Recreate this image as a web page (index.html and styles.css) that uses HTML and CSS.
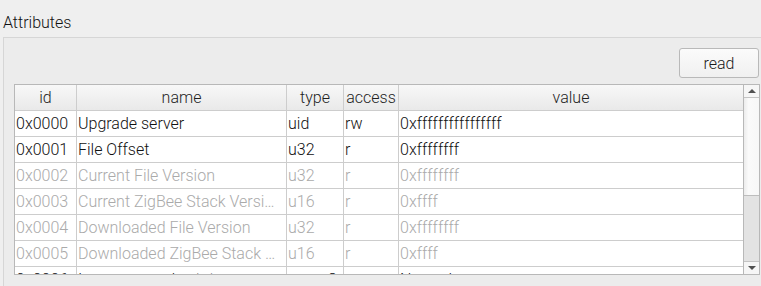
FILE: index.html
```html
<!DOCTYPE html>
<html>
<head>
<meta charset="utf-8">
<link rel="stylesheet" href="styles.css">
</head>
<body>
<div class="title">Attributes</div>
<div class="group">
  <div class="toolbar"><button class="btn">read</button></div>
  <div class="table">
    <div class="viewport">
      <div class="row head">
        <div class="c">id</div><div class="c">name</div><div class="c">type</div><div class="c">access</div><div class="c">value</div>
      </div>
      <div class="row">
        <div class="c">0x0000</div><div class="c">Upgrade server</div><div class="c">uid</div><div class="c">rw</div><div class="c">0xffffffffffffffff</div>
      </div>
      <div class="row">
        <div class="c">0x0001</div><div class="c">File Offset</div><div class="c">u32</div><div class="c">r</div><div class="c">0xffffffff</div>
      </div>
      <div class="row off">
        <div class="c">0x0002</div><div class="c">Current File Version</div><div class="c">u32</div><div class="c">r</div><div class="c">0xffffffff</div>
      </div>
      <div class="row off">
        <div class="c">0x0003</div><div class="c">Current ZigBee Stack Versi…</div><div class="c">u16</div><div class="c">r</div><div class="c">0xffff</div>
      </div>
      <div class="row off">
        <div class="c">0x0004</div><div class="c">Downloaded File Version</div><div class="c">u32</div><div class="c">r</div><div class="c">0xffffffff</div>
      </div>
      <div class="row off">
        <div class="c">0x0005</div><div class="c">Downloaded ZigBee Stack …</div><div class="c">u16</div><div class="c">r</div><div class="c">0xffff</div>
      </div>
      <div class="row">
        <div class="c">0x0006</div><div class="c">Image upgrade status</div><div class="c">enum8</div><div class="c">r</div><div class="c">Normal</div>
      </div>
    </div>
    <div class="scrollbar">
      <div class="sb-btn up"><span class="arrow-up"></span></div>
      <div class="sb-handle"></div>
      <div class="sb-track"></div>
      <div class="sb-btn down"><span class="arrow-down"></span></div>
    </div>
  </div>
</div>
</body>
</html>
```

FILE: styles.css
```css
html, body {
  margin: 0;
  padding: 0;
}
body {
  width: 761px;
  height: 286px;
  overflow: hidden;
  background: #efefef;
  font-family: Roboto, "Liberation Sans", sans-serif;
  font-size: 16px;
  font-weight: 300;
  color: #111;
}
.title {
  box-sizing: border-box;
  height: 37px;
  padding: 13px 0 0 3px;
  line-height: 19px;
  color: #111;
}
.group {
  margin-left: 3px;
  border-top: 1px solid #d6d6d6;
  border-left: 1px solid #d6d6d6;
  background: #ececec;
  padding: 10px 1px 20px 10px;
}
.toolbar {
  display: flex;
  justify-content: flex-end;
}
.btn {
  box-sizing: border-box;
  width: 80px;
  height: 30px;
  margin: 0 1px 0 0;
  padding: 0;
  border: 1px solid #b9b9b9;
  border-radius: 3px;
  background: linear-gradient(#fbfbfb, #f0f0f0);
  font-family: inherit;
  font-size: 16px;
  font-weight: 300;
  color: #1a1a1a;
}
.table {
  margin-top: 6px;
  display: flex;
  height: 189px;
  border: 1px solid #b8b8b8;
  background: #fff;
}
.viewport {
  flex: 1;
  overflow: hidden;
}
.row {
  display: grid;
  grid-template-columns: 62px 210px 57px 55px 1fr;
  height: 26px;
}
.c {
  box-sizing: border-box;
  height: 26px;
  padding: 0 0 0 1px;
  line-height: 25px;
  border-right: 1px solid #cdcdcd;
  border-bottom: 1px solid #cdcdcd;
  white-space: nowrap;
  overflow: hidden;
}
.c:last-child {
  border-right: none;
}
.head .c {
  text-align: center;
  padding: 0;
  background: linear-gradient(#f8f8f8, #e9e9e9);
  color: #1e1e1e;
}
.off .c {
  color: #aaaaaa;
}
.scrollbar {
  width: 15px;
  border-left: 1px solid #b8b8b8;
  display: flex;
  flex-direction: column;
  background: #e3e3e3;
}
.sb-btn {
  height: 12px;
  display: flex;
  align-items: center;
  justify-content: center;
  background: #f6f6f6;
}
.sb-btn.up {
  border-bottom: 1px solid #c4c4c4;
}
.sb-btn.down {
  border-top: 1px solid #c4c4c4;
}
.sb-handle {
  height: 97px;
  background: linear-gradient(90deg, #ececec, #fafafa 30%, #f7f7f7);
  border-bottom: 1px solid #bdbdbd;
}
.sb-track {
  flex: 1;
}
.arrow-up {
  width: 0;
  height: 0;
  border-left: 4px solid transparent;
  border-right: 4px solid transparent;
  border-bottom: 4px solid #505050;
}
.arrow-down {
  width: 0;
  height: 0;
  border-left: 4px solid transparent;
  border-right: 4px solid transparent;
  border-top: 4px solid #505050;
}
```
